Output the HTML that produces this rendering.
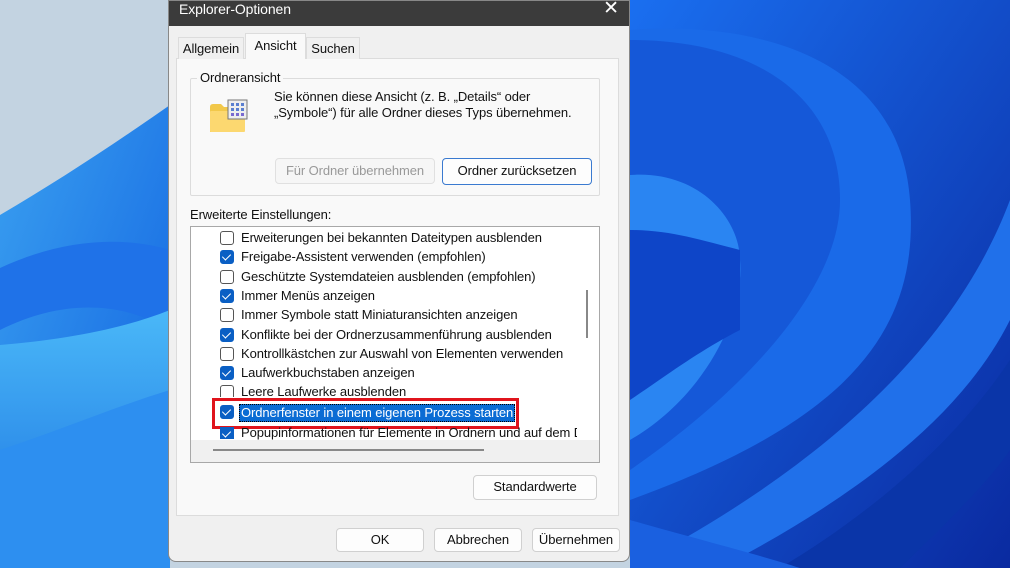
<!DOCTYPE html>
<html><head><meta charset="utf-8"><style>
*{box-sizing:border-box;margin:0;padding:0}
body{width:1010px;height:568px;overflow:hidden;position:relative;font-family:"Liberation Sans",sans-serif;font-size:13px;color:#111;letter-spacing:-0.1px}
.abs{position:absolute}
.btn{position:absolute;background:#fdfdfd;border:1px solid #d0d0d0;border-radius:4px;text-align:center;line-height:22px;font-size:13px}
.cb{position:absolute;left:220px;width:14px;height:14px;border:1px solid #555;border-radius:3px;background:#fff}
.cb.on{background:#0a5fc4;border-color:#0a5fc4}
.cb.on:after{content:"";position:absolute;left:3px;top:1px;width:4px;height:7px;border:solid #fff;border-width:0 1.5px 1.5px 0;transform:rotate(45deg)}
.lt{position:absolute;left:241px;white-space:nowrap}
</style></head><body>
<svg class="abs" style="left:0;top:0" width="1010" height="568" viewBox="0 0 1010 568">
<defs>
<linearGradient id="g1" x1="0" y1="0" x2="1" y2="1"><stop offset="0" stop-color="#3aa0f0"/><stop offset="1" stop-color="#1060e0"/></linearGradient>
<linearGradient id="g2" x1="0" y1="0" x2="1" y2="1"><stop offset="0" stop-color="#1a6ff0"/><stop offset="1" stop-color="#0a2aa0"/></linearGradient>
<linearGradient id="g3" x1="0" y1="0" x2="0" y2="1"><stop offset="0" stop-color="#4ab8f8"/><stop offset="1" stop-color="#1a70e0"/></linearGradient>
</defs>
<rect width="1010" height="568" fill="#c3d3e1"/>
<path d="M0 215 C60 180 120 140 170 105 L170 568 L0 568Z" fill="url(#g1)"/>
<path d="M0 268 C60 240 120 235 170 250 L170 330 C120 300 60 300 0 330Z" fill="#1f72e8"/>
<path d="M0 345 C60 340 120 330 170 310 L170 568 L0 568Z" fill="url(#g3)"/>
<path d="M0 450 C60 430 120 405 170 390 L170 568 L0 568Z" fill="#2d8ff0"/>
<rect x="630" y="0" width="380" height="568" fill="url(#g2)"/>
<path d="M630 30 C760 20 900 60 910 200 C920 330 850 420 630 500Z" fill="#1a6ae8"/>
<path d="M630 40 C760 40 840 100 840 200 C840 280 760 380 630 470Z" fill="#1558d8"/>
<path d="M630 175 C700 170 740 220 740 260 C745 320 700 400 630 440Z" fill="#2a85f2"/>
<path d="M630 230 C670 230 700 240 740 250 L740 330 C700 350 660 380 630 400Z" fill="#0e45c8"/>
<path d="M1010 200 C950 360 800 480 630 568 L720 568 C850 500 960 420 1010 320Z" fill="#2070ea"/>
<path d="M1010 360 C950 450 860 520 780 568 L900 568 C950 520 990 480 1010 450Z" fill="#0a35a8"/>
<path d="M630 520 C700 540 760 555 800 568 L630 568Z" fill="#1a60e0"/>
</svg>
<div class="abs" style="left:168px;top:0;width:462px;height:562px;background:#f0f0f0;border:1px solid #888;border-radius:0 0 8px 8px;overflow:hidden">
<div class="abs" style="left:0;top:0;width:462px;height:25px;background:#3b3b3b;color:#fff;font-size:14px;padding:0 0 0 10px;line-height:16px">Explorer-Optionen</div>
<div class="abs" style="right:10px;top:-2px;color:#fff;font-size:19px;line-height:20px">✕</div>
</div>
<div class="abs" style="left:176px;top:58px;width:443px;height:458px;background:#f9f9f9;border:1px solid #dcdcdc"></div>
<div class="abs" style="left:178px;top:37px;width:66px;height:22px;border:1px solid #dcdcdc;border-bottom:none;background:#f0f0f0;text-align:center;line-height:21px">Allgemein</div>
<div class="abs" style="left:245px;top:33px;width:61px;height:26px;border:1px solid #dcdcdc;border-bottom:none;background:#f9f9f9;text-align:center;line-height:24px">Ansicht</div>
<div class="abs" style="left:306px;top:37px;width:54px;height:22px;border:1px solid #dcdcdc;border-bottom:none;background:#f0f0f0;text-align:center;line-height:21px">Suchen</div>
<div class="abs" style="left:190px;top:78px;width:410px;height:118px;border:1px solid #dcdcdc;border-radius:2px"></div>
<div class="abs" style="left:197px;top:70px;background:#f9f9f9;padding:0 3px">Ordneransicht</div>
<svg class="abs" style="left:209px;top:99px" width="40" height="35"><path d="M1 8 Q1 5 4 5 L12 5 L15 8 L26 8 L26 33 L1 33Z" fill="#f2c84a"/><rect x="1" y="12" width="35" height="21" rx="1" fill="#fcd870"/><rect x="19" y="1" width="19" height="19" fill="#eee" stroke="#777"/><g fill="#5a7fd0"><rect x="22" y="4" width="3" height="3"/><rect x="27" y="4" width="3" height="3"/><rect x="32" y="4" width="3" height="3"/><rect x="22" y="9" width="3" height="3"/><rect x="27" y="9" width="3" height="3"/><rect x="32" y="9" width="3" height="3"/><rect x="22" y="14" width="3" height="3" fill="#7a6ad0"/><rect x="27" y="14" width="3" height="3" fill="#7a6ad0"/><rect x="32" y="14" width="3" height="3" fill="#7a6ad0"/></g></svg>
<div class="abs" style="left:274px;top:89px;line-height:16px">Sie können diese Ansicht (z. B. „Details“ oder<br>„Symbole“) für alle Ordner dieses Typs übernehmen.</div>
<div class="btn" style="left:275px;top:158px;width:160px;height:26px;color:#999;border-color:#e0e0e0;background:#f6f6f6;line-height:24px">Für Ordner übernehmen</div>
<div class="btn" style="left:442px;top:158px;width:150px;height:27px;border:1.5px solid #3a7ad0;line-height:24px">Ordner zurücksetzen</div>
<div class="abs" style="left:190px;top:207px">Erweiterte Einstellungen:</div>
<div class="abs" style="left:190px;top:226px;width:410px;height:237px;border:1px solid #a8a8a8;background:#fff"></div>
<div class="abs" style="left:191px;top:440px;width:408px;height:22px;background:#f0f0f0"></div>
<div class="abs" style="left:213px;top:449px;width:271px;height:2px;background:#888"></div>
<div class="abs" style="left:586px;top:290px;width:2px;height:48px;background:#888"></div>
<div class="cb" style="top:231px"></div><div class="lt" style="top:230px">Erweiterungen bei bekannten Dateitypen ausblenden</div>
<div class="cb on" style="top:250px"></div><div class="lt" style="top:249px">Freigabe-Assistent verwenden (empfohlen)</div>
<div class="cb" style="top:270px"></div><div class="lt" style="top:269px">Geschützte Systemdateien ausblenden (empfohlen)</div>
<div class="cb on" style="top:289px"></div><div class="lt" style="top:288px">Immer Menüs anzeigen</div>
<div class="cb" style="top:308px"></div><div class="lt" style="top:307px">Immer Symbole statt Miniaturansichten anzeigen</div>
<div class="cb on" style="top:328px"></div><div class="lt" style="top:327px">Konflikte bei der Ordnerzusammenführung ausblenden</div>
<div class="cb" style="top:347px"></div><div class="lt" style="top:346px">Kontrollkästchen zur Auswahl von Elementen verwenden</div>
<div class="cb on" style="top:366px"></div><div class="lt" style="top:365px">Laufwerkbuchstaben anzeigen</div>
<div class="cb" style="top:385px;height:12px;border-bottom:none;border-radius:3px 3px 0 0"></div><div class="lt" style="top:384px;height:14px;overflow:hidden">Leere Laufwerke ausblenden</div>
<div class="cb on" style="top:405px"></div><div class="lt" style="left:239px;top:404px;height:18px;background:#0a6cd4;border:1px dotted #000;color:#fff;padding:0 1px;line-height:15px">Ordnerfenster in einem eigenen Prozess starten</div>
<div class="abs" style="left:212px;top:398px;width:307px;height:31px;border:3px solid #e0141c"></div>
<div class="cb on" style="top:427px;height:12px;border-radius:0"></div><div class="lt" style="top:425px;height:15px;overflow:hidden;width:336px">Popupinformationen für Elemente in Ordnern und auf dem Desktop</div>
<div class="btn" style="left:473px;top:475px;width:124px;height:25px">Standardwerte</div>
<div class="btn" style="left:336px;top:528px;width:88px;height:24px">OK</div>
<div class="btn" style="left:434px;top:528px;width:88px;height:24px">Abbrechen</div>
<div class="btn" style="left:532px;top:528px;width:88px;height:24px">Übernehmen</div>
</body></html>
